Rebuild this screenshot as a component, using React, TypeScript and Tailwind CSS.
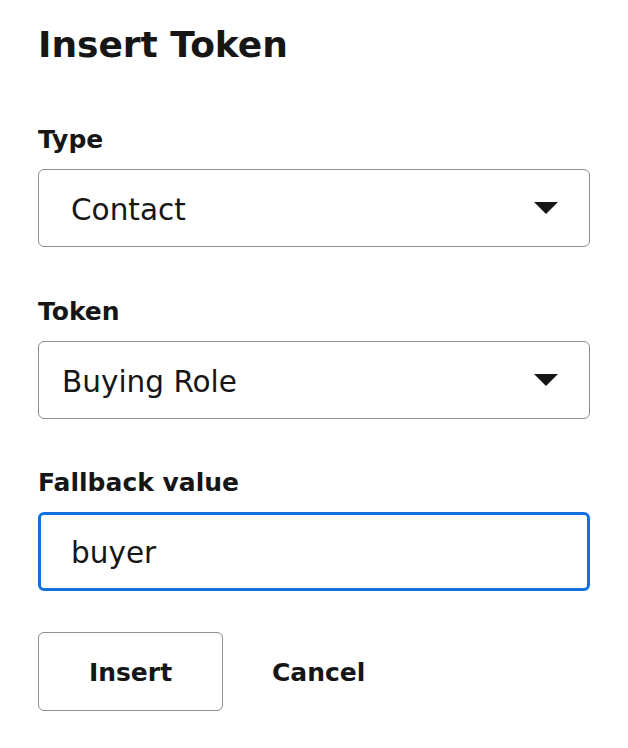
import React from "react";

function Caret() {
  return (
    <svg width="24" height="12" viewBox="0 0 24 12" className="shrink-0">
      <path d="M0 0 H24 L12 12 Z" fill="#161616" />
    </svg>
  );
}

export default function App() {
  const font = { fontFamily: '"DejaVu Sans", "Liberation Sans", sans-serif' };
  return (
    <div className="w-[628px] h-[748px] bg-white text-[#161616] px-[38px] pt-[24px]" style={font}>
      <h1 className="text-[36px] leading-[42px] font-bold">Insert Token</h1>

      <label className="block mt-[59px] text-[25px] leading-[30px] font-bold">Type</label>
      <div className="mt-[14px] w-[552px] h-[78px] border-[1.5px] border-[#8d8d8d] rounded-[6px] flex items-center justify-between pl-[32px] pr-[31px]">
        <span className="text-[29.5px] leading-[36px] pt-[3px]">Contact</span>
        <Caret />
      </div>

      <label className="block mt-[50px] text-[25px] leading-[30px] font-bold">Token</label>
      <div className="mt-[14px] w-[552px] h-[78px] border-[1.5px] border-[#8d8d8d] rounded-[6px] flex items-center justify-between pl-[23px] pr-[31px]">
        <span className="text-[29.5px] leading-[36px] pt-[3px]">Buying Role</span>
        <Caret />
      </div>

      <label className="block mt-[49px] text-[25px] leading-[30px] font-bold">Fallback value</label>
      <div className="mt-[14px] w-[552px] h-[79px] border-[3px] border-[#1170e0] rounded-[6px] flex items-center pl-[30px]">
        <span className="text-[29.5px] leading-[36px] pt-[3px]">buyer</span>
      </div>

      <div className="mt-[41px] flex items-center gap-[49px]">
        <button className="w-[185px] h-[79px] border-[1.5px] border-[#8d8d8d] rounded-[6px] text-[25px] font-bold bg-white text-[#161616] pt-[3px]" style={font}>
          Insert
        </button>
        <button className="text-[25px] font-bold bg-transparent text-[#161616] pt-[3px]" style={font}>
          Cancel
        </button>
      </div>
    </div>
  );
}
